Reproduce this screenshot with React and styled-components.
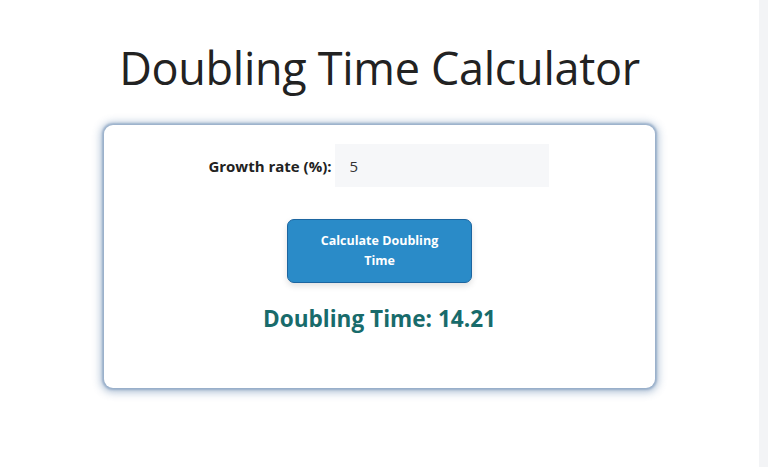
import React, { useState } from "react";
import styled, { createGlobalStyle } from "styled-components";

const GlobalStyle = createGlobalStyle`
    html, body {
        margin: 0;
        padding: 0;
        background: #fff;
    }
    body {
        font-family: "Open Sans", "Noto Sans", sans-serif;
        color: #222;
    }
`;

const Page = styled.div`
    display: flex;
    width: 768px;
    height: 467px;
    overflow: hidden;
`;
const Main = styled.main`
    flex: 1;
    display: flex;
    flex-direction: column;
    align-items: center;
`;
const Gutter = styled.div`
    width: 9px;
    background: #f3f4f6;
`;
const Title = styled.h1`
    margin: 38px 0 0;
    font-size: 45px;
    font-weight: 400;
    line-height: 60px;
    color: #222;
    letter-spacing: -0.3px;
`;
const Card = styled.div`
    box-sizing: border-box;
    margin-top: 27px;
    width: 551px;
    height: 263px;
    padding-top: 19px;
    border-radius: 9px;
    background: #fff;
    box-shadow: 0 0 2px 2px rgba(130, 158, 190, 0.65), 0 1px 9px 3px rgba(70, 110, 160, 0.45);
    display: flex;
    flex-direction: column;
    align-items: center;
`;
const Row = styled.div`
    display: flex;
    align-items: center;
    gap: 3px;
    margin-left: -2px;
`;
const Label = styled.label`
    font-size: 15px;
    font-weight: 700;
    color: #222;
`;
const Input = styled.input`
    box-sizing: border-box;
    width: 214px;
    height: 43px;
    border: none;
    outline: none;
    background: #f6f7f9;
    padding: 0 15px;
    font-family: inherit;
    font-size: 15px;
    color: #333;
`;
const Button = styled.button`
    box-sizing: border-box;
    margin-top: 32px;
    width: 185px;
    height: 64px;
    padding: 0 28px;
    border: 1px solid #1c65a0;
    border-radius: 7px;
    background: #2a8bc8;
    color: #fff;
    font-family: inherit;
    font-size: 12.5px;
    font-weight: 700;
    line-height: 20px;
    box-shadow: 0 3px 6px rgba(0, 0, 0, 0.12);
    cursor: pointer;
`;
const Result = styled.p`
    margin: 20px 0 0;
    font-size: 22.6px;
    font-weight: 700;
    color: #186b6b;
`;

const App = () => {
    const [rate, setRate] = useState("5");
    const [result, setResult] = useState("14.21");

    const calculate = () => {
        const r = parseFloat(rate);
        if (r > 0) setResult((Math.log(2) / Math.log(1 + r / 100)).toFixed(2));
    };

    return (
        <Page>
            <GlobalStyle />
            <Main>
                <Title>Doubling Time Calculator</Title>
                <Card>
                    <Row>
                        <Label htmlFor="rate">Growth rate (%):</Label>
                        <Input id="rate" value={rate} onChange={e => setRate(e.target.value)} />
                    </Row>
                    <Button onClick={calculate}>Calculate Doubling Time</Button>
                    <Result>Doubling Time: {result}</Result>
                </Card>
            </Main>
            <Gutter />
        </Page>
    );
};

export default App;
